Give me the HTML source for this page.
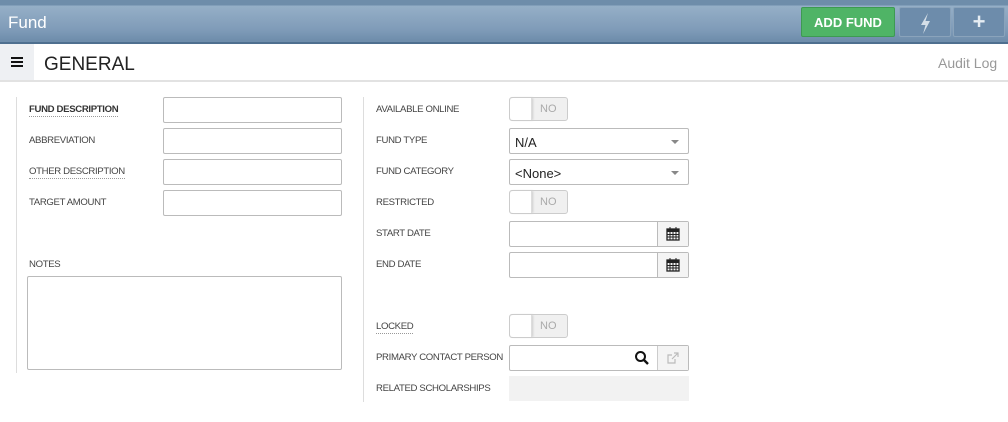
<!DOCTYPE html><html><head><style>
body{margin:0;width:1008px;height:422px;background:#fff;font-family:"Liberation Sans",sans-serif;position:relative;overflow:hidden}
.a{position:absolute}
.top{left:0;top:0;width:1008px;height:42px;background:linear-gradient(#6e8daa 0,#6e8daa 5px,#95afc7 6px,#7f9bb8 30px,#6f8eac 40px);border-bottom:2px solid #4e6f8f}
.lbl{font-size:9.6px;color:#444;letter-spacing:-0.35px;white-space:nowrap}
.u{border-bottom:1px dotted #999;padding-bottom:1px}
.in{border:1px solid #bbb;border-radius:2px;background:#fff;box-sizing:border-box;height:26px}
.tg{width:59px;height:24px;border:1px solid #ccc;border-radius:3px;background:#f0f0f0;box-sizing:border-box}
.tg .k{position:absolute;left:0;top:0;width:21px;height:22px;background:#fff;border-right:1px solid #ddd;border-radius:3px 0 0 3px;box-shadow:1px 0 2px #ccc}
.tg .t{position:absolute;left:30px;top:5px;font-size:11px;color:#aaa}
.dd{position:absolute;right:9px;top:11px;border:4px solid transparent;border-top:4px solid #888}
.cal{position:absolute;right:0;top:0;width:30px;height:24px;background:#f4f4f4;border-left:1px solid #bbb}
</style></head><body>
<div class="a top"></div>
<div class="a" style="left:8px;top:13px;color:#fff;font-size:17px">Fund</div>
<div class="a" style="left:801px;top:7px;width:94px;height:30px;background:#4fb466;border:1px solid #3d9a52;border-radius:2px;color:#fff;font-weight:bold;font-size:13px;text-align:center;line-height:30px;box-sizing:border-box">ADD FUND</div>
<div class="a" style="left:899px;top:7px;width:52px;height:30px;background:#6d8cab;border:1px solid #8aa3bb;box-sizing:border-box;border-radius:2px"><svg width="52" height="30"><path d="M28 5 L21 17 L25.5 17 L23 26 L30 13 L25.5 13 Z" fill="#d5dfe8"/></svg></div>
<div class="a" style="left:953px;top:7px;width:52px;height:30px;background:#6d8cab;border:1px solid #8aa3bb;box-sizing:border-box;border-radius:2px;color:#e6edf3;font-size:22px;font-weight:bold;text-align:center;line-height:28px">+</div>
<div class="a" style="left:0;top:44px;width:34px;height:36px;background:#eef0f3"></div>
<div class="a" style="left:11px;top:57px;width:12px;height:2px;background:#111;box-shadow:0 4px 0 #111,0 8px 0 #111"></div>
<div class="a" style="left:44px;top:54px;font-size:19px;color:#222">GENERAL</div>
<div class="a" style="left:938px;top:55px;font-size:14px;color:#999">Audit Log</div>
<div class="a" style="left:0;top:80px;width:1008px;height:2px;background:#e2e2e2"></div>
<div class="a" style="left:16px;top:97px;width:1px;height:276px;background:#ddd"></div>
<div class="a" style="left:363px;top:97px;width:1px;height:305px;background:#ddd"></div>
<div class="a lbl" style="left:29px;top:104px;font-weight:bold;color:#333"><span class="u">FUND DESCRIPTION</span></div>
<div class="a lbl" style="left:29px;top:135px">ABBREVIATION</div>
<div class="a lbl" style="left:29px;top:166px"><span class="u">OTHER DESCRIPTION</span></div>
<div class="a lbl" style="left:29px;top:197px">TARGET AMOUNT</div>
<div class="a lbl" style="left:29px;top:259px">NOTES</div>
<div class="a in" style="left:163px;top:97px;width:179px"></div>
<div class="a in" style="left:163px;top:128px;width:179px"></div>
<div class="a in" style="left:163px;top:159px;width:179px"></div>
<div class="a in" style="left:163px;top:190px;width:179px"></div>
<div class="a in" style="left:27px;top:276px;width:315px;height:94px"></div>
<div class="a lbl" style="left:376px;top:104px">AVAILABLE ONLINE</div>
<div class="a lbl" style="left:376px;top:135px">FUND TYPE</div>
<div class="a lbl" style="left:376px;top:166px">FUND CATEGORY</div>
<div class="a lbl" style="left:376px;top:197px">RESTRICTED</div>
<div class="a lbl" style="left:376px;top:228px">START DATE</div>
<div class="a lbl" style="left:376px;top:259px">END DATE</div>
<div class="a lbl" style="left:376px;top:321px"><span class="u">LOCKED</span></div>
<div class="a lbl" style="left:376px;top:352px">PRIMARY CONTACT PERSON</div>
<div class="a lbl" style="left:376px;top:383px">RELATED SCHOLARSHIPS</div>
<div class="a tg" style="left:509px;top:97px"><div class="k"></div><div class="t">NO</div></div>
<div class="a in" style="left:509px;top:128px;width:180px;font-size:13px;padding:6px 5px;color:#222">N/A<div class="dd"></div></div>
<div class="a in" style="left:509px;top:159px;width:180px;font-size:13px;padding:6px 5px;color:#222">&lt;None&gt;<div class="dd"></div></div>
<div class="a tg" style="left:509px;top:190px"><div class="k"></div><div class="t">NO</div></div>
<div class="a in" style="left:509px;top:221px;width:180px"><div class="cal"><svg width="30" height="24"><rect x="9" y="7" width="12" height="11" fill="none" stroke="#222" stroke-width="1.3"/><rect x="9" y="7" width="12" height="3" fill="#222"/><path d="M12 5v3M18 5v3M9 12.5h12M9 15h12M12 10v8M15 10v8M18 10v8" stroke="#222" stroke-width="1"/></svg></div></div>
<div class="a in" style="left:509px;top:252px;width:180px"><div class="cal"><svg width="30" height="24"><rect x="9" y="7" width="12" height="11" fill="none" stroke="#222" stroke-width="1.3"/><rect x="9" y="7" width="12" height="3" fill="#222"/><path d="M12 5v3M18 5v3M9 12.5h12M9 15h12M12 10v8M15 10v8M18 10v8" stroke="#222" stroke-width="1"/></svg></div></div>
<div class="a tg" style="left:509px;top:314px"><div class="k"></div><div class="t">NO</div></div>
<div class="a in" style="left:509px;top:345px;width:180px"><div class="a" style="right:30px;top:0;width:1px;height:24px;background:#ccc"></div><div class="a" style="right:0;top:0;width:30px;height:24px;background:#f4f4f4"></div>
<svg class="a" style="left:124px;top:4px" width="16" height="16"><circle cx="6.5" cy="6.5" r="4.5" fill="none" stroke="#111" stroke-width="2"/><path d="M10 10l4 4" stroke="#111" stroke-width="2.4"/></svg>
<svg class="a" style="left:155px;top:4px" width="16" height="16"><path d="M10 9v4H3V5h4" fill="none" stroke="#bbb" stroke-width="1.2"/><path d="M7 9l6-6M9 3h4v4" fill="none" stroke="#bbb" stroke-width="1.2"/></svg></div>
<div class="a" style="left:509px;top:376px;width:180px;height:25px;background:#f2f2f2"></div>
</body></html>
